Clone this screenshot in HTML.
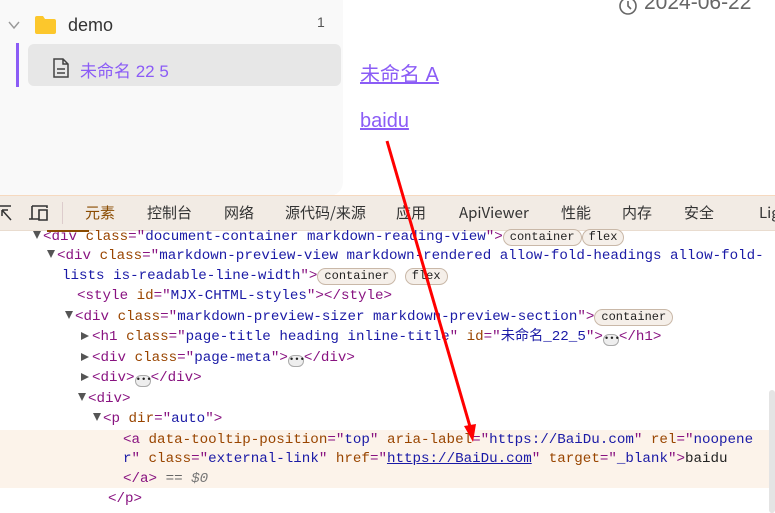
<!DOCTYPE html>
<html><head><meta charset="utf-8"><style>
*{margin:0;padding:0;box-sizing:border-box}
body{width:775px;height:513px;overflow:hidden;background:#fff;position:relative;font-family:"Liberation Sans","Noto Sans CJK SC",sans-serif}
.side{position:absolute;left:0;top:0;width:343px;height:196px;background:#f9f9f9;border-bottom-right-radius:14px}
.tb{position:absolute;left:0;top:195px;width:775px;height:36px;background:#f2ebe4;border-top:1px solid #f6d9bf;border-bottom:1px solid #e9dccf}
.tb span{position:absolute;top:0;height:34px;line-height:34px;font-size:15px;color:#333;font-family:"Noto Sans CJK SC","Liberation Sans",sans-serif}
.code{position:absolute;left:0;top:227px;width:775px;font-family:"Liberation Mono","Noto Sans CJK SC",monospace;font-size:14.2px;color:#222}
.l{position:absolute;white-space:pre;height:20px;line-height:20px}
.t{color:#881280}.a{color:#994500}.v{color:#1a1aa6}
.b{display:inline-block;border:1px solid #c9b8a8;background:#f5efe9;border-radius:9px;padding:0 6px;font-size:12px;line-height:15px;color:#222;vertical-align:0}
.d{display:inline-block;border:1px solid #aaa;background:#eee;border-radius:6px;width:16px;height:12px;font-size:9px;line-height:9px;text-align:center;vertical-align:-1px}
.tri{display:inline-block;width:0;height:0;border-left:4px solid transparent;border-right:4px solid transparent;border-top:8px solid #555;margin-right:2px;vertical-align:1px}
.tr{display:inline-block;width:0;height:0;border-top:4px solid transparent;border-bottom:4px solid transparent;border-left:8px solid #555;margin-right:3px;vertical-align:0}
</style></head><body>
<div class="side">
  <svg style="position:absolute;left:8px;top:20px" width="12" height="10"><path d="M1 2 L6 8 L11 2" stroke="#999" stroke-width="1.4" fill="none"/></svg>
  <svg style="position:absolute;left:34px;top:15px" width="24" height="20"><path d="M1 3 Q1 1 3 1 H9 L11 4 H20 Q22 4 22 6 V17 Q22 19 20 19 H3 Q1 19 1 17Z" fill="#fcc72c"/></svg>
  <div style="position:absolute;left:68px;top:15px;font-size:18px;color:#333">demo</div>
  <div style="position:absolute;left:317px;top:14px;font-size:14px;color:#555">1</div>
  <div style="position:absolute;left:16px;top:43px;width:3px;height:44px;background:#8b5cf6"></div>
  <div style="position:absolute;left:28px;top:44px;width:313px;height:42px;background:#e7e7e7;border-radius:6px"></div>
  <svg style="position:absolute;left:52px;top:58px" width="18" height="20"><path d="M2 1 H11 L16 6 V19 H2Z M11 1 V6 H16 M5 11 H13 M5 15 H13" stroke="#444" stroke-width="1.5" fill="none"/></svg>
  <div style="position:absolute;left:80px;top:57px;font-size:17px;color:#8b5cf6">未命名 22 5</div>
</div>
<svg style="position:absolute;left:617px;top:-5px" width="24" height="24"><circle cx="11" cy="11" r="8" stroke="#666" stroke-width="1.6" fill="none"/><path d="M11 6 V11 L14 14" stroke="#666" stroke-width="1.6" fill="none"/></svg>
<div style="position:absolute;left:644px;top:-9px;font-size:21px;color:#666">2024-06-22</div>
<div style="position:absolute;left:360px;top:58px;font-size:20px;color:#8b5cf6;text-decoration:underline">未命名 A</div>
<div style="position:absolute;left:360px;top:110px;font-size:20px;color:#8b5cf6;text-decoration:underline">baidu</div>
<div class="tb">
  <svg style="position:absolute;left:-2px;top:8px" width="16" height="18"><path d="M2 2 H13 M4 6 L13 16 M4 6 V12 M4 6 H10" stroke="#333" stroke-width="1.5" fill="none"/></svg>
  <svg style="position:absolute;left:28px;top:8px" width="22" height="18"><path d="M4 2 V15 H1 M4 2 H19 V4 M11 6 H19 V16 H11Z M1 15 H11" stroke="#333" stroke-width="1.6" fill="none"/></svg>
  <div style="position:absolute;left:62px;top:6px;width:1px;height:22px;background:#dcc"></div>
  <span style="left:85px;color:#8a4b00">元素</span>
  <span style="left:147px">控制台</span><span style="left:224px">网络</span><span style="left:285px">源代码/来源</span>
  <span style="left:396px">应用</span><span style="left:459px">ApiViewer</span><span style="left:561px">性能</span>
  <span style="left:622px">内存</span><span style="left:684px">安全</span><span style="left:759px">Lig</span>
</div>
<div style="position:absolute;left:47px;top:230px;width:42px;height:2px;background:#8a4b00;z-index:2"></div>
<div style="position:absolute;left:0;top:430px;width:775px;height:58px;background:#fcf3ea"></div>
<div class="code">
<div class="l" style="left:33px;top:0"><i class="tri"></i><span class="t">&lt;div</span> <span class="a">class</span><span class="t">="</span><span class="v">document-container markdown-reading-view</span><span class="t">"&gt;</span><span class="b">container</span><span class="b">flex</span></div>
<div class="l" style="left:47px;top:19px"><i class="tri"></i><span class="t">&lt;div</span> <span class="a">class</span><span class="t">="</span><span class="v">markdown-preview-view markdown-rendered allow-fold-headings allow-fold-</span></div>
<div class="l" style="left:62px;top:39px"><span class="v">lists is-readable-line-width</span><span class="t">"&gt;</span><span class="b">container</span> <span class="b">flex</span></div>
<div class="l" style="left:77px;top:59px"><span class="t">&lt;style</span> <span class="a">id</span><span class="t">="</span><span class="v">MJX-CHTML-styles</span><span class="t">"&gt;&lt;/style&gt;</span></div>
<div class="l" style="left:65px;top:80px"><i class="tri"></i><span class="t">&lt;div</span> <span class="a">class</span><span class="t">="</span><span class="v">markdown-preview-sizer markdown-preview-section</span><span class="t">"&gt;</span><span class="b">container</span></div>
<div class="l" style="left:81px;top:100px"><i class="tr"></i><span class="t">&lt;h1</span> <span class="a">class</span><span class="t">="</span><span class="v">page-title heading inline-title</span><span class="t">"</span> <span class="a">id</span><span class="t">="</span><span class="v">未命名_22_5</span><span class="t">"&gt;</span><span class="d">•••</span><span class="t">&lt;/h1&gt;</span></div>
<div class="l" style="left:81px;top:121px"><i class="tr"></i><span class="t">&lt;div</span> <span class="a">class</span><span class="t">="</span><span class="v">page-meta</span><span class="t">"&gt;</span><span class="d">•••</span><span class="t">&lt;/div&gt;</span></div>
<div class="l" style="left:81px;top:141px"><i class="tr"></i><span class="t">&lt;div&gt;</span><span class="d">•••</span><span class="t">&lt;/div&gt;</span></div>
<div class="l" style="left:78px;top:162px"><i class="tri"></i><span class="t">&lt;div&gt;</span></div>
<div class="l" style="left:93px;top:182px"><i class="tri"></i><span class="t">&lt;p</span> <span class="a">dir</span><span class="t">="</span><span class="v">auto</span><span class="t">"&gt;</span></div>
<div class="l" style="left:123px;top:203px"><span class="t">&lt;a</span> <span class="a">data-tooltip-position</span><span class="t">="</span><span class="v">top</span><span class="t">"</span> <span class="a">aria-label</span><span class="t">="</span><span class="v">https://BaiDu.com</span><span class="t">"</span> <span class="a">rel</span><span class="t">="</span><span class="v">noopene</span></div>
<div class="l" style="left:123px;top:222px"><span class="v">r</span><span class="t">"</span> <span class="a">class</span><span class="t">="</span><span class="v">external-link</span><span class="t">"</span> <span class="a">href</span><span class="t">="</span><span class="v" style="text-decoration:underline">https://BaiDu.com</span><span class="t">"</span> <span class="a">target</span><span class="t">="</span><span class="v">_blank</span><span class="t">"&gt;</span>baidu</div>
<div class="l" style="left:123px;top:242px"><span class="t">&lt;/a&gt;</span> <span style="color:#666">==</span> <span style="color:#777;font-style:italic">$0</span></div>
<div class="l" style="left:108px;top:262px"><span class="t">&lt;/p&gt;</span></div>
</div>
<div style="position:absolute;left:769px;top:390px;width:6px;height:123px;background:#e4e4e4;border-radius:3px"></div>
<svg style="position:absolute;left:0;top:0" width="775" height="513"><path d="M387 141 L471 430" stroke="#f00" stroke-width="3"/><path d="M464 426 L473 442 L476 424Z" fill="#f00"/></svg>
</body></html>
